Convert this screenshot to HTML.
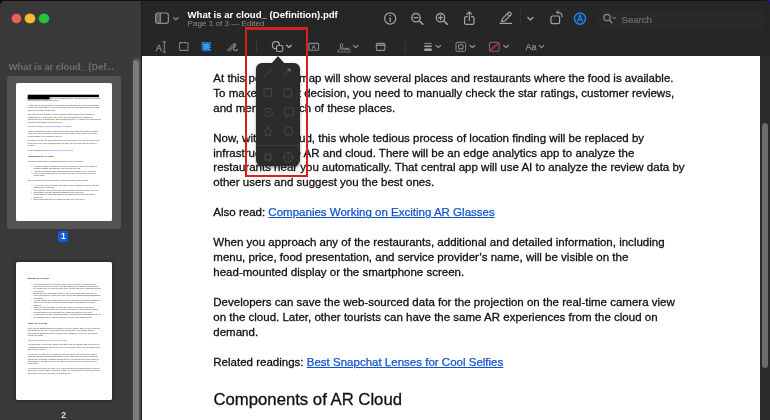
<!DOCTYPE html>
<html><head><meta charset="utf-8"><title>Preview</title>
<style>
*{box-sizing:border-box;margin:0;padding:0}
html,body{width:770px;height:420px;overflow:hidden;background:#111113}
body{background:radial-gradient(circle at 770px 0,#3d18a8 0,#22106a 3px,#111113 8px),radial-gradient(circle at 0 0,#1a0c30 0,#111113 6px)}
body{position:relative;font-family:"Liberation Sans",sans-serif}
#win{position:absolute;left:0;top:1px;width:770px;height:430px;border-radius:5px 6px 0 0;overflow:hidden;background:#262626}
#side{position:absolute;left:0;top:0;width:141px;height:430px;background:#393939}
#sdiv{position:absolute;left:141px;top:0;width:1px;height:430px;background:#1c1c1c}
#tb{position:absolute;left:142px;top:0;width:628px;height:55.2px;background:#262626}
.tl{position:absolute;top:12.8px;width:9.6px;height:9.6px;border-radius:50%}
#doc{position:absolute;left:142px;top:55.2px;width:618px;height:375px;background:#fff}
#rs{position:absolute;left:760px;top:55px;width:10px;height:375px;background:#2b2b2b}
#rthumb{position:absolute;left:762px;top:122px;width:6px;height:245px;border-radius:3px;background:#6b6b6b}
#lthumb{position:absolute;left:133px;top:59px;width:6px;height:380px;border-radius:3px;background:#7a7a7a}
#ltrack{position:absolute;left:130px;top:56px;width:11px;height:380px;border-radius:5px 5px 0 0;background:linear-gradient(90deg,#393939,#414141 30%,#505050 90%,#444)}
#stitle{position:absolute;left:8.8px;top:60px;font-weight:bold;font-size:9.3px;color:#6f6f6f;white-space:nowrap;line-height:12px}
#sel{position:absolute;left:7.2px;top:75.2px;width:114.2px;height:152.4px;background:#545454;border-radius:3.5px}
.th{position:absolute;left:15.6px;width:96.8px;background:#fff;border-radius:1.5px;overflow:hidden}
#badge{position:absolute;left:58.4px;top:229.8px;width:10px;height:11px;border-radius:2.5px;background:#0b5fd8;color:#fff;font-weight:bold;font-size:8.5px;line-height:11px;text-align:center}
#n2{position:absolute;left:53.6px;top:409px;width:20px;color:#ddd;font-weight:bold;font-size:8.5px;line-height:11px;text-align:center}
#title{position:absolute;left:187.5px;top:7.5px;color:#fff;font-weight:bold;font-size:9.6px;line-height:12px;white-space:nowrap}
#sub{position:absolute;left:187.5px;top:18.2px;color:#8c8c8c;font-size:8.1px;line-height:10px;white-space:nowrap}
#txt{position:absolute;left:213.3px;top:69.75px;font-size:11.52px;line-height:14.95px;color:#111;-webkit-text-stroke:.3px #111;white-space:nowrap}
#txt a{color:#1155cc;text-decoration:underline;-webkit-text-stroke:.25px #1155cc}
#h2{position:absolute;left:213.5px;top:388.8px;font-size:16.72px;line-height:20px;color:#111;-webkit-text-stroke:.3px #111;white-space:nowrap}
#red{position:absolute;left:245px;top:25.8px;width:62.6px;height:149.8px;border:solid #d81f22;border-width:3.2px 2.8px 2.7px 2.8px}
#pop{position:absolute;left:256.2px;top:61.5px;width:43.7px;height:103.8px;border-radius:6px;background:#2b2b2b;box-shadow:0 1.5px 3px rgba(0,0,0,.4)}
#parrow{position:absolute;left:271px;top:54.5px;width:0;height:0;border-left:7px solid transparent;border-right:7px solid transparent;border-bottom:8px solid #2b2b2b}
#pdiv{position:absolute;left:256.2px;top:144px;width:43.7px;height:1px;background:#3d3d3d}
svg{position:absolute;left:0;top:0;overflow:visible}
#search{position:absolute;left:597px;top:8.5px;width:167px;height:20px;border-radius:5px;background:#292929}
#stext{position:absolute;left:621.5px;top:13px;font-size:9.6px;line-height:12px;color:#6e6e6e;-webkit-text-stroke:.2px #6e6e6e}
#aa{position:absolute;left:525.5px;top:40px;font-size:9px;line-height:12px;color:#8c8c8c;-webkit-text-stroke:.25px #8c8c8c}
#ta{position:absolute;left:155.7px;top:41.5px;font-size:9.2px;line-height:12px;color:#8c8c8c;-webkit-text-stroke:.3px #8c8c8c}
#tba{position:absolute;left:311.600px;top:42.200px;font-size:6.200px;line-height:9px;color:#8c8c8c;font-weight:bold}
.mp{position:absolute;left:0;top:0;width:595px;height:842px;padding:72px 72px 0 72px;transform:scale(.1627);transform-origin:0 0;font-size:11px;line-height:14.5px;color:#2a2a2a;white-space:normal}
.mp p{margin:0 0 14.5px 0}
.mp h3{font-size:13px;margin:23px 0 18px 0}
.mp ul{margin:0 0 14.5px 36px}
.mp a{color:#15c}
.rd{background:#000;color:#000;padding:1.5px 0}
#win,#ic,#ta,#tba{filter:blur(.35px)}
</style></head>
<body>
<div id="win">
 <div id="side">
  <div class="tl" style="left:11.5px;background:#ee5f58;box-shadow:0 0 0 .5px #b8453f"></div>
  <div class="tl" style="left:25.4px;background:#f5bd2f;box-shadow:0 0 0 .5px #b98a1e"></div>
  <div class="tl" style="left:39.3px;background:#2ac23f;box-shadow:0 0 0 .5px #1d8f2c"></div>
  <div id="stitle">What is ar cloud_ (Def...</div>
  <div id="ltrack"></div><div id="lthumb"></div>
  <div id="sel"></div>
  <div class="th" id="t1" style="top:82.2px;height:137.5px"><div class="mp">
<p><span class="rd">Suppose you are visiting a new city and searching for a good place to eat lunch. You open the map app on your phone</span> and type restaurants near me. The app then reads your location and pulls a list of results from its server.</p>
<p>At this point, the map will show several places and restaurants where the food is available. To make the best decision, you need to manually check the star ratings, customer reviews, and menus of each of these places.</p>
<p>Now, with AR cloud, this whole tedious process of location finding will be replaced by infrastructure like AR and cloud. There will be an edge analytics app to analyze the restaurants near you automatically. That central app will use AI to analyze the review data by other users and suggest you the best ones.</p>
<p>Also read: <a>Companies Working on Exciting AR Glasses</a></p>
<p>When you approach any of the restaurants, additional and detailed information, including menu, price, food presentation, and service provider’s name, will be visible on the head-mounted display or the smartphone screen.</p>
<p>Developers can save the web-sourced data for the projection on the real-time camera view on the cloud. Later, other tourists can have the same AR experiences from the cloud on demand.</p>
<p>Related readings: <a>Best Snapchat Lenses for Cool Selfies</a></p>
<h3>Components of AR Cloud</h3>
<p>The major components of a functional augmented reality cloud include:</p>
<ul><li>A machine-readable persistent copy of the real-world like location coordinates. It should be scalable and shareable as per the user requests.</li>
<li>A software to instantly localize surroundings of the requester of the AR content.</li>
<li>Ability to place content into the real world in real time so that remote users can interact with it.</li></ul>
<p>The cloud storage and interaction part of AR cloud depends on these factors:</p>
<ul><li>An AR device that can perform edge-based content positioning, analysis, and data transfer to the central app.</li>
<li>There should be high-performance edge-computing resources near the AR device.</li>
<li>Data storage, such as embedded persistent memory and cloud.</li>
<li>Technologies like 5G for fast transfer of real-world content to the cloud without latency, etc.</li>
<li>Data compression system to handle big data on the cloud server.</li></ul>
</div></div>
  <div id="badge">1</div>
  <div class="th" id="t2" style="top:261px;height:137.5px;box-shadow:0 0 4px rgba(0,0,0,.5)"><div class="mp">
<h3>Benefits of AR Cloud</h3>
<ul><li>The primary benefit of AR cloud is to share your view of the AR world with other users who are located remotely. With this technology, the physical world becomes the canvas, and every user can paint, place, interact, and remove digital objects from it in real time.</li>
<li>Brands can place virtual ads, directions, and offers in public places that only AR device users can see. This is more cost-effective than installing physical billboards in such places.</li>
<li>You can organize an AR-based game or puzzle and invite people from all across the world to play together. AR cloud content is persistent and shareable over long distances.</li>
<li>Using AR cloud technology, you can train, educate, and inform people about emergency situations and how to respond. Users can re-engage with the training program whenever they want since the program is persistent on the cloud.</li>
<li>AR cloud makes remote technical assistance, repairing, and troubleshooting easy as the technician can see what the customer sees and place guiding objects.</li></ul>
<h3>Future of AR Cloud</h3>
<p>Many tech and gaming giants are investing in AR cloud research. Soon, you will experience a breakthrough. Then the AR cloud will be the obvious choice for education, gaming, entertainment, sightseeing, remote training, remote assistance, and so on. AR cloud will become the default.</p>
<p>Also read: <a>Virtual Reality Is the Future of Gaming</a></p>
<p>You can imagine AR cloud as a parallel world that people can access using AR devices like AR glasses, smartphones, tablets, and so on. You can create, place, and edit digital content that everyone can see.</p>
<p>For example, you can leave a message for your friend at the cafe that only they can see. Users can also upload social media posts for a place rather than on a profile. Games like Pokémon Go could place persistent characters in the real world so that a group of players can collaborate. Tourists could leave reviews of a monument on the monument itself for other visitors.</p>
<p>AR cloud will truly unlock the value of AR. When that happens, businesses and developers will be able to create shared experiences at scale. Get familiar with the technology today so that you are prepared for the future of the spatial web.</p>
</div></div>
  <div id="n2">2</div>
 </div>
 <div id="sdiv"></div>
 <div id="tb">
 </div>
 <div id="title">What is ar cloud_ (Definition).pdf</div>
 <div id="sub">Page 1 of 3 — Edited</div>
 <div id="search"></div><div id="stext">Search</div>
 <div id="aa">Aa</div>
 <div id="doc"></div>
 <div id="txt">At this point, the map will show several places and restaurants where the food is available.<br>To make the best decision, you need to manually check the star ratings, customer reviews,<br>and menus of each of these places.<br><br>Now, with AR cloud, this whole tedious process of location finding will be replaced by<br>infrastructure like AR and cloud. There will be an edge analytics app to analyze the<br>restaurants near you automatically. That central app will use AI to analyze the review data by<br>other users and suggest you the best ones.<br><br>Also read: <a>Companies Working on Exciting AR Glasses</a><br><br>When you approach any of the restaurants, additional and detailed information, including<br>menu, price, food presentation, and service provider’s name, will be visible on the<br>head-mounted display or the smartphone screen.<br><br>Developers can save the web-sourced data for the projection on the real-time camera view<br>on the cloud. Later, other tourists can have the same AR experiences from the cloud on<br>demand.<br><br>Related readings: <a>Best Snapchat Lenses for Cool Selfies</a></div>
 <div id="h2">Components of AR Cloud</div>
 <div id="rs"></div><div id="rthumb"></div>
 <div id="pop"></div><div id="parrow"></div><div id="pdiv"></div>
 <div id="red"></div>
</div>
<svg id="ic" width="770" height="420" viewBox="0 0 770 420" fill="none" stroke-linecap="round" stroke-linejoin="round">
<!-- sidebar toggle -->
<g stroke="#909090" stroke-width="1.2">
<rect x="155.6" y="13" width="12.8" height="10.4" rx="2.4"/>
<path d="M160.3 13V23.4"/>
<rect x="156" y="13.4" width="4.3" height="9.6" fill="#909090" fill-opacity=".45" stroke="none"/>
<path d="M173.6 17.6l2.3 2.2 2.3-2.2" stroke-width="1.3"/>
</g>
<!-- top row right icons -->
<g stroke="#a2a2a2" stroke-width="1.2">
<circle cx="390.2" cy="18.5" r="5.6"/>
<path d="M390.2 18v3.4" stroke-width="1.4"/><circle cx="390.2" cy="15.6" r=".8" fill="#a2a2a2" stroke="none"/>
<circle cx="416" cy="17.7" r="4.2" stroke-width="1.3"/><path d="M419.3 21l3.4 3.2" stroke-width="1.7"/><path d="M414 17.7h4"/>
<circle cx="440.5" cy="17.7" r="4.2" stroke-width="1.3"/><path d="M443.8 21l3.4 3.2" stroke-width="1.7"/><path d="M438.5 17.7h4M440.5 15.7v4"/>
<path d="M467 16.7h-1.2a1.2 1.2 0 0 0-1.2 1.2v5.2a1.2 1.2 0 0 0 1.2 1.2h7a1.2 1.2 0 0 0 1.2-1.2v-5.2a1.2 1.2 0 0 0-1.2-1.2h-1.2"/>
<path d="M469.3 20.6V11.9M466.9 14.2l2.4-2.4 2.4 2.4"/>
<path d="M501.6 21.6l.8-2.9 6.2-6.2a1.2 1.2 0 0 1 1.7 0l.6.6a1.2 1.2 0 0 1 0 1.7l-6.2 6.2z"/><path d="M507.2 13.9l2.2 2.2"/><path d="M500 23.4h11.6" stroke-width="1.1"/>
<path d="M527.8 17.6l2.6 2.4 2.6-2.4" stroke-width="1.4"/>
<rect x="551" y="16" width="8.6" height="7.6" rx="1.4"/>
<path d="M556.6 12.3q5-.6 5.6 4.2"/><path d="M558.3 10.6l-1.8 1.7 1.9 1.6" stroke-width="1"/>
</g>
<path d="M520.3 9.5v14.5" stroke="#353535" stroke-width="1"/>
<!-- markup -->
<circle cx="580" cy="18.6" r="5.6" stroke="#2f80e4" stroke-width="1.4" fill="#14335c"/>
<path d="M577.7 21.4l2.3-6.6 2.3 6.6M578.6 19.6h2.8" stroke="#2f80e4" stroke-width="1.1"/>
<!-- search icon -->
<g stroke="#8c8c8c" stroke-width="1.2"><circle cx="607" cy="17.6" r="3.2"/><path d="M609.4 20.1l2.5 2.6" stroke-width="1.4"/><path d="M612.6 17.3l1.6 1.5 1.6-1.5" stroke-width="1"/></g>
<!-- row 2 -->
<g stroke="#8c8c8c" stroke-width="1.1">
<path d="M164.3 42.2v9.6M163 41.9h2.6M163 52.1h2.6" stroke-width="1"/>
<rect x="179.6" y="42.6" width="8.4" height="7.8" rx="1" stroke-dasharray="2.1 1.3"/>
<path d="M227.5 50.5l6-6.5M229.5 51l6.5-7M234 43.5q2.5 1 .5 3.500q-2 2.500 0 3.500q1.500.5 3-1"/>
<rect x="308.8" y="43.4" width="9.8" height="6.8" rx="1"/>
<path d="M338.200 50.300c1.600-.6 3.300-2.300 4.300-4.300c.9-1.900-.3-3.200-1.500-2.300c-1.500 1.200-.8 4.800 1.300 6.400l1.300-2.300l1 2.300l1.300-2.300l1 2.300l1.300-2.300l1 2.300h.8" stroke-width="1"/>
<path d="M337.600 51.900h12.800" stroke-width=".8"/>
<path d="M353.400 45.400l2.300 2.200 2.300-2.200" stroke-width="1.300"/>
<rect x="376.400" y="43.400" width="8.400" height="7" rx="1"/><path d="M376.400 45.300h8.400" stroke-width="1.600"/>
<path d="M435.900 45.400l2.400 2.200 2.400-2.200" stroke-width="1.300"/>
<rect x="456" y="42.300" width="9.600" height="9" rx="1" stroke-dasharray="1.800 .8" stroke-width="1"/><rect x="458.600" y="44.700" width="4.400" height="4.200" rx="1"/>
<path d="M470 45.400l2.400 2.200 2.400-2.200" stroke-width="1.300"/>
<rect x="489.500" y="42.300" width="9.600" height="9" rx="1.500" stroke="#7a6a6a"/>
<path d="M503.700 45.400l2.400 2.200 2.400-2.200" stroke-width="1.300"/>
<path d="M539.200 45.400l2.300 2.200 2.300-2.200" stroke-width="1.300"/>
</g>
<path d="M490.500 50.300l7.600-7" stroke="#d03030" stroke-width="1.300"/>
<path d="M424.300 43.600h7.400" stroke="#a8a8a8" stroke-width=".8" stroke-linecap="butt"/>
<path d="M424.300 46.300h7.400" stroke="#a8a8a8" stroke-width="1.500" stroke-linecap="butt"/>
<path d="M424.300 49.700h7.400" stroke="#a8a8a8" stroke-width="2.400" stroke-linecap="butt"/>
<path d="M256.400 40.500v11.500M405.300 40.500v11.500" stroke="#3c3c3c" stroke-width="1"/>
<!-- blue burst -->
<rect x="203.200" y="43.600" width="6" height="6" fill="#2f9bff"/>
<rect x="202.600" y="43" width="7.200" height="7.200" stroke="#2b8ff2" stroke-width="2.200" stroke-dasharray="1.300 .9" stroke-linecap="butt"/>
<!-- shapes -->
<g stroke="#a2a2a2" stroke-width="1.200">
<circle cx="275.900" cy="45.200" r="3.500"/>
<rect x="276.500" y="45.500" width="6.300" height="6" rx="1.500" fill="#262626"/>
<path d="M286.600 45.300l2.300 2.200 2.300-2.200" stroke-width="1.400"/>
</g>
<!-- popup icons -->
<g stroke="#444" stroke-width="1.100">
<path d="M264.500 76l6.500-6.500" stroke="#3c3c3c"/>
<path d="M283.500 75.500l6-6" stroke="#3c3c3c"/><path d="M288 69.400h1.900v1.900" stroke="#808080"/>
<rect x="264" y="88.600" width="7.600" height="7.600" rx=".8"/>
<rect x="284" y="88.600" width="7.600" height="7.600" rx="2"/>
<circle cx="268.200" cy="112.400" r="4.200"/>
<path d="M285.500 108h7a1 1 0 0 1 1 1v5a1 1 0 0 1-1 1h-4.500l-2 2v-2h-.5a1 1 0 0 1-1-1v-5a1 1 0 0 1 1-1z"/>
<path d="M268 127l1.400 3 3.200.4-2.400 2.200.6 3.200-2.800-1.600-2.800 1.600.6-3.200-2.400-2.200 3.200-.4z"/>
<path d="M286.500 127.300h4.400l2.200 4-2.200 4h-4.400l-2.200-4z"/>
<rect x="265.200" y="154.300" width="5.600" height="5.600" stroke-width="1.600"/>
<circle cx="288.200" cy="157.300" r="4.700"/><path d="M283.500 157.300h9.400M288.200 152.600v9.400" stroke-width=".8"/><circle cx="268" cy="112.400" r="1.200" stroke-width=".8"/>
</g>
</svg>
<div id="ta">A</div><div id="tba">A</div>

</body></html>
